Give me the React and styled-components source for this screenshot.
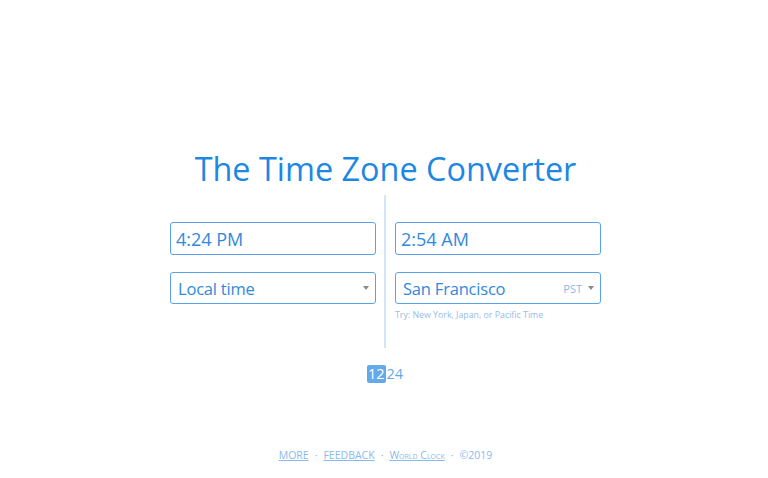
import React, {useState} from 'react';
import styled, {createGlobalStyle} from 'styled-components';

const GlobalStyle = createGlobalStyle`
  html, body {
    margin: 0;
    padding: 0;
    background: #fff;
    font-family: "Open Sans", "Liberation Sans", sans-serif;
  }
`

const App = () => {
  const [format, setFormat] = useState(12);

  return (
    <Page>
      <GlobalStyle />
      <Title>The Time Zone Converter</Title>
      <Converter>
        <Column>
          <TimeBox>4:24 PM</TimeBox>
          <ZoneBox>
            <ZoneName>Local time</ZoneName>
            <Caret />
          </ZoneBox>
        </Column>
        <Divider />
        <Column>
          <TimeBox>2:54 AM</TimeBox>
          <ZoneBox>
            <ZoneName>San Francisco</ZoneName>
            <Abbr>PST</Abbr>
            <Caret />
          </ZoneBox>
          <Hint>Try: New York, Japan, or Pacific Time</Hint>
        </Column>
      </Converter>
      <Toggle>
        <FormatButton active={format === 12} onClick={() => setFormat(12)}>12</FormatButton>
        <FormatButton active={format === 24} onClick={() => setFormat(24)}>24</FormatButton>
      </Toggle>
      <Footer>
        <FooterLink>MORE</FooterLink>
        <Dot>·</Dot>
        <FooterLink>FEEDBACK</FooterLink>
        <Dot>·</Dot>
        <FooterLink small>World Clock</FooterLink>
        <Dot>·</Dot>
        <Copy>©2019</Copy>
      </Footer>
    </Page>
  );
};

const Page = styled.div`
  display: flex;
  flex-direction: column;
  align-items: center;
  padding: 148px 0 0 3px;
`

const Title = styled.h1`
  margin: 0;
  font-size: 32.4px;
  line-height: 40px;
  font-weight: 400;
  color: #1d87e4;
`

const Converter = styled.div`
  display: flex;
  margin-top: 7px;
  height: 153px;
`

const Column = styled.div`
  width: 206px;
  padding-top: 27px;
  display: flex;
  flex-direction: column;
`

const Divider = styled.div`
  width: 2px;
  margin: 0 9px 0 8px;
  background: #d3e6f8;
`

const Box = styled.div`
  box-sizing: border-box;
  display: flex;
  align-items: center;
  border: 1px solid #59a3ea;
  border-radius: 3px;
  color: #3089dd;
`

const TimeBox = styled(Box)`
  height: 33px;
  padding: 0 5px;
  font-size: 18px;
`

const ZoneBox = styled(Box)`
  height: 32px;
  margin-top: 17px;
  padding: 0 6px 0 7px;
  font-size: 16.5px;
  letter-spacing: -0.2px;
`

const ZoneName = styled.span`
  flex: 1;
`

const Abbr = styled.span`
  font-size: 11px;
  letter-spacing: 0;
  color: #8ab9ec;
  margin-right: 6px;
`

const Caret = styled.span`
  width: 0;
  height: 0;
  border-left: 3px solid transparent;
  border-right: 3px solid transparent;
  border-top: 4px solid #8a8a8a;
`

const Hint = styled.div`
  margin-top: 5px;
  font-size: 8.8px;
  color: #94bdea;
`

const Toggle = styled.div`
  display: flex;
  margin-top: 17px;
`

const FormatButton = styled.button`
  border: none;
  margin: 0;
  padding: 0 1px;
  height: 18px;
  font-family: inherit;
  font-size: 14.5px;
  line-height: 18px;
  border-radius: 2px;
  cursor: pointer;
  background: ${p => p.active ? '#64aaea' : 'transparent'};
  color: ${p => p.active ? '#fff' : '#64aaea'};
`

const Footer = styled.div`
  display: flex;
  align-items: baseline;
  margin-top: 65px;
  font-size: 10.5px;
  color: #8ab9ec;
`

const FooterLink = styled.a`
  color: #8ab9ec;
  text-decoration: underline;
  cursor: pointer;
  font-variant: ${p => p.small ? 'small-caps' : 'normal'};
`

const Dot = styled.span`
  margin: 0 6px;
`

const Copy = styled.span``

export default App;
